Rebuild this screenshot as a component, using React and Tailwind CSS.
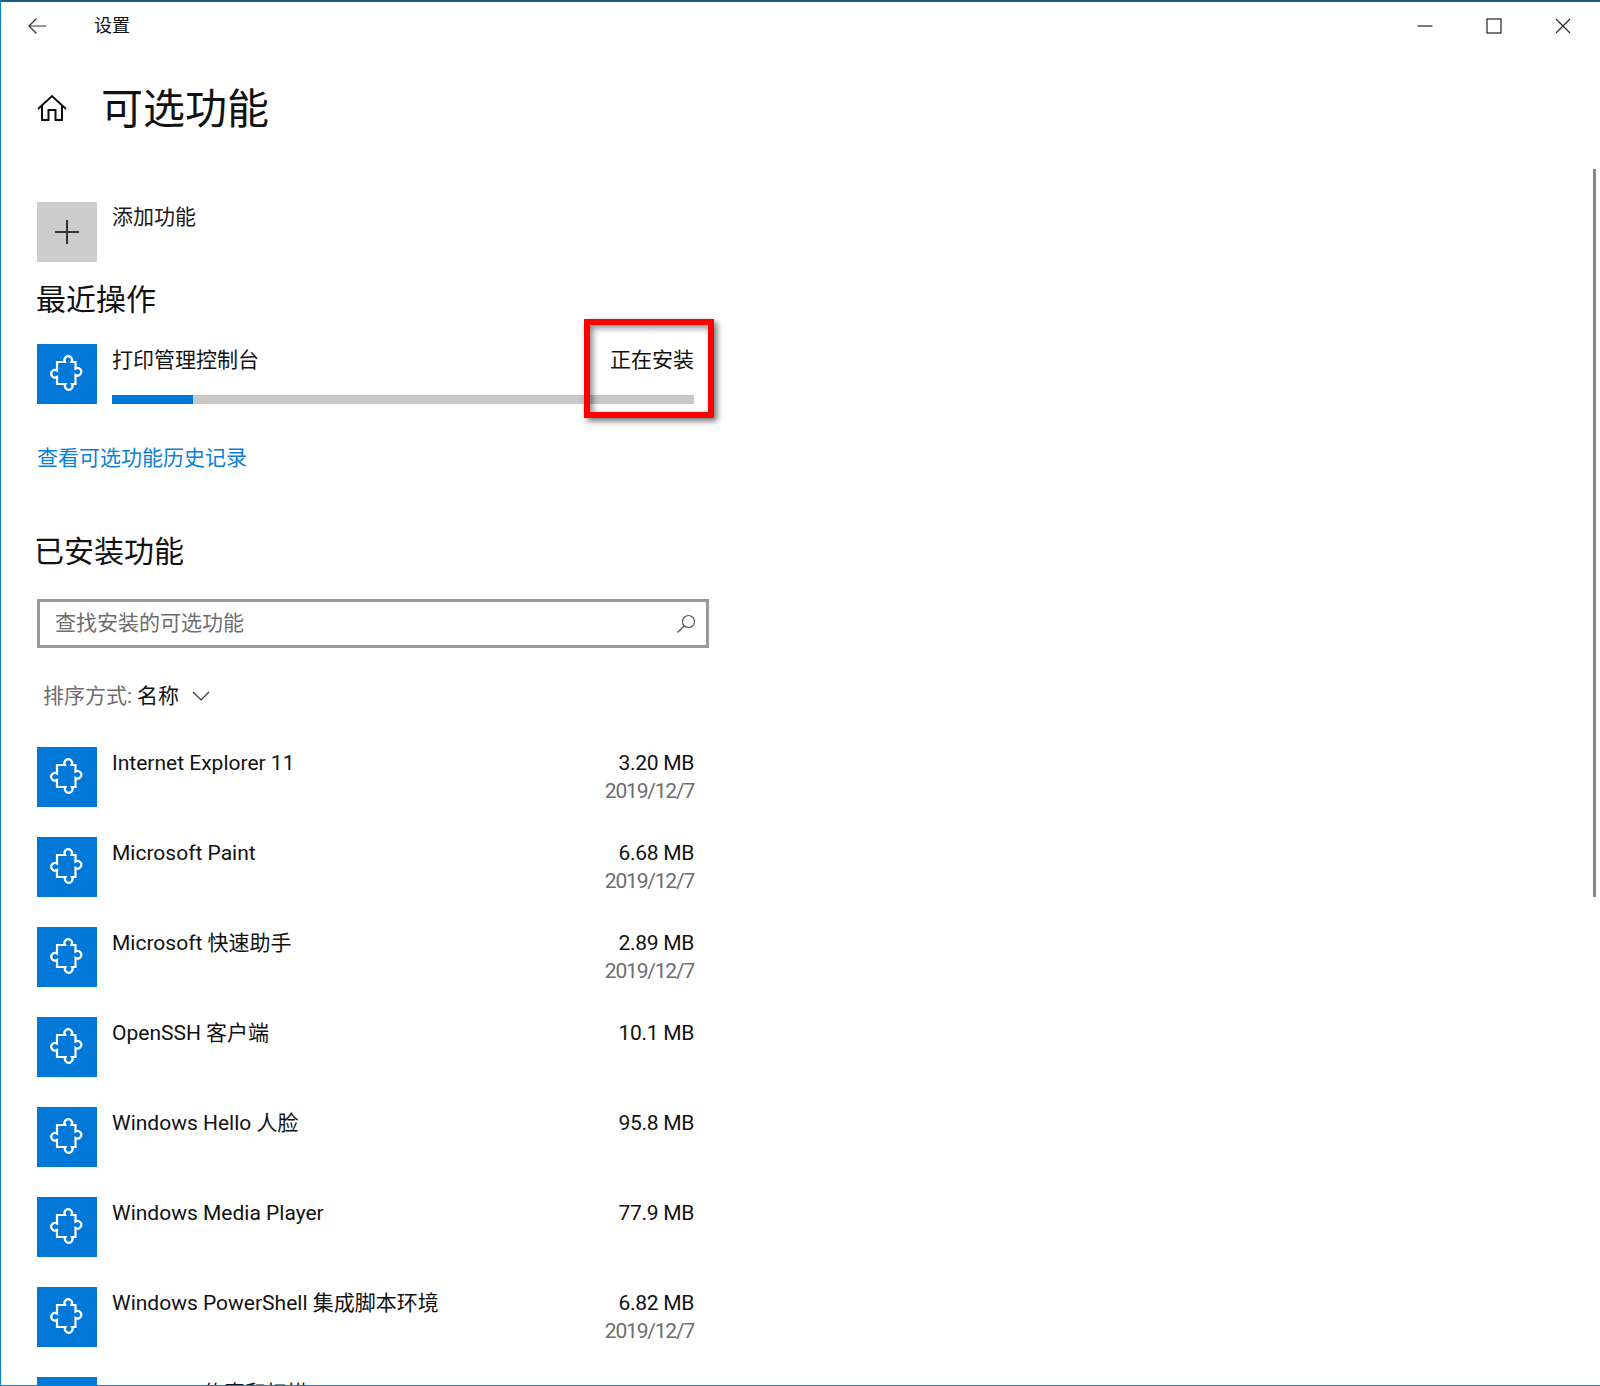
const font = { fontFamily: 'Roboto, "Noto Sans CJK SC", sans-serif' };

const features = [
  { name: 'Internet Explorer 11', size: '3.20 MB', date: '2019/12/7' },
  { name: 'Microsoft Paint', size: '6.68 MB', date: '2019/12/7' },
  { name: 'Microsoft 快速助手', size: '2.89 MB', date: '2019/12/7' },
  { name: 'OpenSSH 客户端', size: '10.1 MB' },
  { name: 'Windows Hello 人脸', size: '95.8 MB' },
  { name: 'Windows Media Player', size: '77.9 MB' },
  { name: 'Windows PowerShell 集成脚本环境', size: '6.82 MB', date: '2019/12/7' },
  { name: 'Windows 传真和扫描' },
];

const PuzzleTile = () => (
  <div className="w-[60px] h-[60px] shrink-0 bg-[#0078d7]">
    <svg width="60" height="60" viewBox="0 0 60 60" fill="none" stroke="#fff" strokeWidth="2.2">
      <path d="M20 18H28A3.800 3.800 0 1 1 34.500 18H38.500V24.500A3.800 3.800 0 1 1 38.500 31V40H35A3.800 3.800 0 1 1 28.500 40H20V33A3.800 3.800 0 1 1 20 26.500Z" />
    </svg>
  </div>
);

const App = () => {
  return (
    <div style={font} className="relative w-[1600px] h-[1386px] bg-white overflow-hidden border-t-2 border-t-[#1a5c88] border-l border-l-[#0a84d8] border-b border-b-[#0a84d8] text-[21px] text-black">
      <header className="h-[48px] flex items-center">
        <div className="w-[72px] flex justify-center">
          <svg width="20" height="18" viewBox="0 0 20 18" fill="none" stroke="#333" strokeWidth="1.200">
            <path d="M19 9H2M9.500 1.500 2 9l7.500 7.500" />
          </svg>
        </div>
        <span className="ml-[21px] -mt-[2px] text-[18px] text-[#111]">设置</span>
        <div className="ml-auto mr-[3px] flex">
          <div className="w-[69px] flex justify-center">
            <svg width="16" height="16" viewBox="0 0 16 16" stroke="#222" strokeWidth="1.200"><path d="M0.500 8h15" /></svg>
          </div>
          <div className="w-[69px] flex justify-center">
            <svg width="16" height="16" viewBox="0 0 16 16" fill="none" stroke="#222" strokeWidth="1.200"><rect x="1" y="1" width="14" height="14" /></svg>
          </div>
          <div className="w-[69px] flex justify-center">
            <svg width="16" height="16" viewBox="0 0 16 16" stroke="#222" strokeWidth="1.100"><path d="M1 1l14 14M15 1 1 15" /></svg>
          </div>
        </div>
      </header>

      <div className="pl-[36px]">
        <div className="h-[116px] flex items-center">
          <svg width="30" height="28" viewBox="0 0 30 28" fill="none" stroke="#111" strokeWidth="2">
            <path d="M1 15 15 2l14 13M5 12v14h6.500v-10h7v10H25V12" />
          </svg>
          <h1 className="ml-[34px] mt-[4px] text-[42px] leading-[50px] text-[#111]">可选功能</h1>
        </div>

        <div className="mt-[36px] flex h-[60px]">
          <div className="w-[60px] h-[60px] bg-[#cccccc] flex items-center justify-center">
            <svg width="26" height="26" viewBox="0 0 26 26" stroke="#333" strokeWidth="2"><path d="M13 1v24M1 13h24" /></svg>
          </div>
          <span className="ml-[15px] leading-[30px] text-[#1a1a1a]">添加功能</span>
        </div>

        <h2 className="mt-[18px] -ml-[1px] h-[38px] leading-[40px] text-[30px] text-[#111]">最近操作</h2>

        <div className="mt-[26px] w-[657px] h-[60px] flex">
          <PuzzleTile />
          <div className="ml-[15px] flex-1 flex flex-col">
            <div className="flex justify-between pt-[2px] leading-[28px] text-[#111]">
              <span>打印管理控制台</span>
              <span>正在安装</span>
            </div>
            <div className="mt-auto h-[9px] bg-[#c8c8c8]">
              <div className="h-full w-[81px] bg-[#0078d7]" />
            </div>
          </div>
        </div>

        <div className="mt-[38px] h-[30px] leading-[32px] text-[#0a7fd9]">查看可选功能历史记录</div>

        <h2 className="mt-[64px] -ml-[3px] h-[30px] leading-[32px] text-[30px] text-[#111]">已安装功能</h2>

        <div className="mt-[33px] w-[672px] h-[49px] border-[3px] border-[#999999] flex items-center justify-between pl-[15px] pr-[10px]">
          <span className="text-[#6e6e6e]">查找安装的可选功能</span>
          <svg width="20" height="20" viewBox="0 0 20 20" fill="none" stroke="#555" strokeWidth="1.200">
            <circle cx="12.500" cy="7.500" r="6" />
            <path d="M8 12 1.500 18.500" />
          </svg>
        </div>

        <div className="mt-[32px] h-[32px] flex items-center pl-[6px] leading-[32px]">
          <span className="text-[#6e6e6e]">排序方式:</span>
          <span className="ml-[5px] text-[#111]">名称</span>
          <svg width="18" height="10" viewBox="0 0 18 10" fill="none" stroke="#333" strokeWidth="1.200" className="ml-[13px]">
            <path d="M1 1l8 8 8-8" />
          </svg>
        </div>

        <ul className="mt-[35px] w-[672px] flex flex-col gap-[30px]">
          {features.map((f) => (
            <li key={f.name} className="flex h-[60px]">
              <PuzzleTile />
              <div className="ml-[15px] pr-[15px] pt-[2px] flex-1 flex justify-between leading-[28px]">
                <span className="text-[#111]">{f.name}</span>
                <div className="text-right">
                  <div className="text-[#111] tracking-[-0.3px]">{f.size}</div>
                  {f.date && <div className="text-[#6e6e6e] tracking-[-1.2px]">{f.date}</div>}
                </div>
              </div>
            </li>
          ))}
        </ul>
      </div>

      {/* scrollbar thumb */}
      <div className="absolute left-[1592px] top-[167px] w-[3px] h-[728px] bg-[#858585]" />

      {/* red annotation box */}
      <div className="absolute left-[583px] top-[317px] w-[130px] h-[99px] border-[6px] border-[#ff0000] shadow-[3px_3px_6px_rgba(0,0,0,0.55),inset_3px_3px_6px_rgba(0,0,0,0.45)]" />
    </div>
  );
};

export default App;
